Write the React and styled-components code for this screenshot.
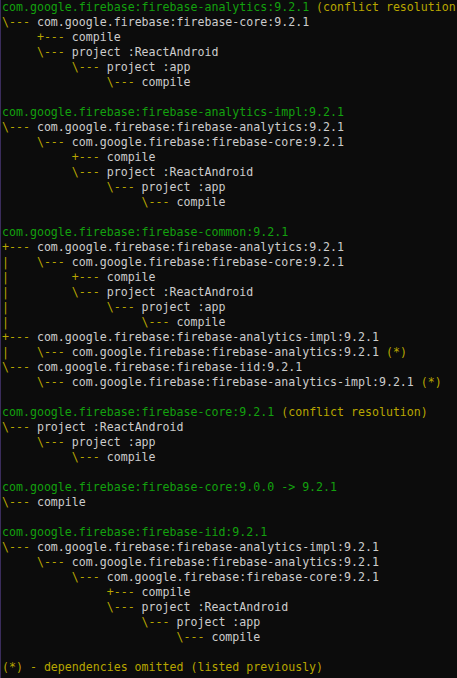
import React from "react";
import styled, { createGlobalStyle } from "styled-components";

const Global = createGlobalStyle`
  html, body {
    margin: 0;
    padding: 0;
    background: #0c0c0c;
  }
`;

const Console = styled.pre`
  margin: 0;
  width: 457px;
  height: 678px;
  box-sizing: border-box;
  overflow: hidden;
  background: #0c0c0c;
  border-left: 1px solid #3b2d5c;
  padding: 0 0 0 1px;
  font-family: "DejaVu Sans Mono", "Liberation Mono", monospace;
  font-size: 11.6px;
  line-height: 15px;
  color: #cccccc;
  white-space: pre;
`;

const Row = styled.div`
  height: 15px;
`;

const Tree = styled.span`
  color: #b8a600;
`;

const Head = styled.span`
  color: #13a10e;
`;

const Note = styled.span`
  color: #b8a600;
`;

// [tree prefix, text, trailing note, is header]
const lines = [
  ["", "com.google.firebase:firebase-analytics:9.2.1", " (conflict resolution)", true],
  ["\\--- ", "com.google.firebase:firebase-core:9.2.1"],
  ["     +--- ", "compile"],
  ["     \\--- ", "project :ReactAndroid"],
  ["          \\--- ", "project :app"],
  ["               \\--- ", "compile"],
  [""],
  ["", "com.google.firebase:firebase-analytics-impl:9.2.1", "", true],
  ["\\--- ", "com.google.firebase:firebase-analytics:9.2.1"],
  ["     \\--- ", "com.google.firebase:firebase-core:9.2.1"],
  ["          +--- ", "compile"],
  ["          \\--- ", "project :ReactAndroid"],
  ["               \\--- ", "project :app"],
  ["                    \\--- ", "compile"],
  [""],
  ["", "com.google.firebase:firebase-common:9.2.1", "", true],
  ["+--- ", "com.google.firebase:firebase-analytics:9.2.1"],
  ["|    \\--- ", "com.google.firebase:firebase-core:9.2.1"],
  ["|         +--- ", "compile"],
  ["|         \\--- ", "project :ReactAndroid"],
  ["|              \\--- ", "project :app"],
  ["|                   \\--- ", "compile"],
  ["+--- ", "com.google.firebase:firebase-analytics-impl:9.2.1"],
  ["|    \\--- ", "com.google.firebase:firebase-analytics:9.2.1", " (*)"],
  ["\\--- ", "com.google.firebase:firebase-iid:9.2.1"],
  ["     \\--- ", "com.google.firebase:firebase-analytics-impl:9.2.1", " (*)"],
  [""],
  ["", "com.google.firebase:firebase-core:9.2.1", " (conflict resolution)", true],
  ["\\--- ", "project :ReactAndroid"],
  ["     \\--- ", "project :app"],
  ["          \\--- ", "compile"],
  [""],
  ["", "com.google.firebase:firebase-core:9.0.0 -> 9.2.1", "", true],
  ["\\--- ", "compile"],
  [""],
  ["", "com.google.firebase:firebase-iid:9.2.1", "", true],
  ["\\--- ", "com.google.firebase:firebase-analytics-impl:9.2.1"],
  ["     \\--- ", "com.google.firebase:firebase-analytics:9.2.1"],
  ["          \\--- ", "com.google.firebase:firebase-core:9.2.1"],
  ["               +--- ", "compile"],
  ["               \\--- ", "project :ReactAndroid"],
  ["                    \\--- ", "project :app"],
  ["                         \\--- ", "compile"],
  [""],
  ["", "", "(*) - dependencies omitted (listed previously)"],
];

const App = () => (
  <>
    <Global />
    <Console>
      {lines.map(([tree, text, note, head], i) => (
        <Row key={i}>
          {tree && <Tree>{tree}</Tree>}
          {head ? <Head>{text}</Head> : text}
          {note && <Note>{note}</Note>}
        </Row>
      ))}
    </Console>
  </>
);

export default App;
